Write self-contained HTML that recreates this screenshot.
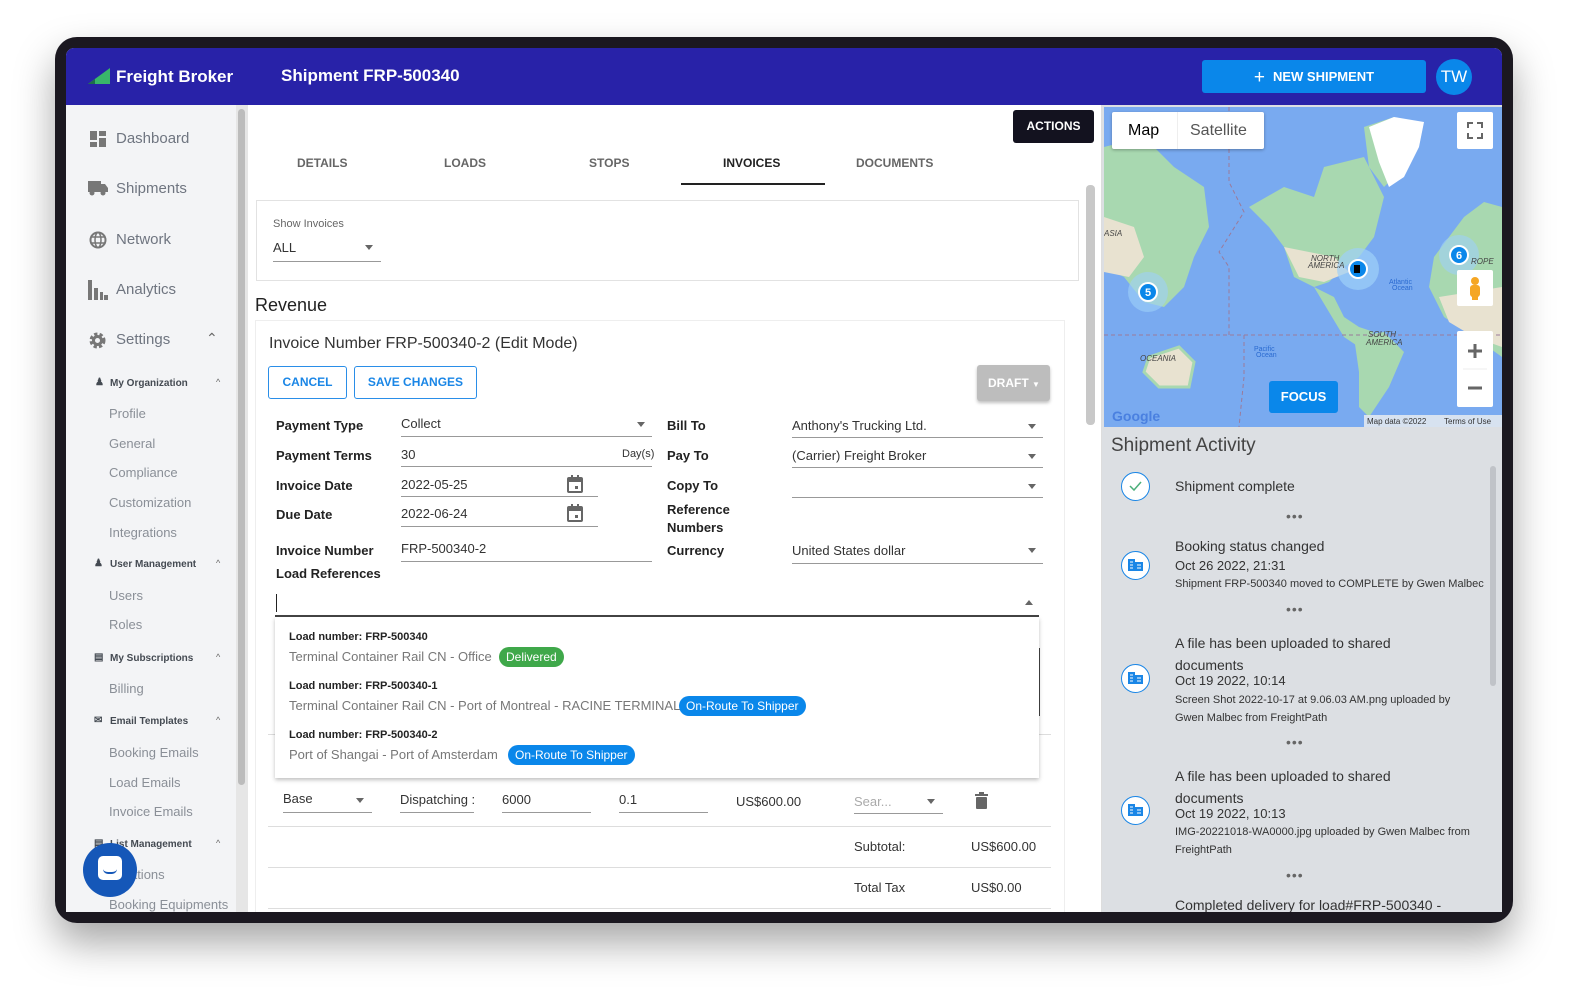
<!DOCTYPE html>
<html><head><meta charset="utf-8"><style>
*{box-sizing:border-box;margin:0;padding:0}
body{width:1572px;height:999px;background:#fff;font-family:"Liberation Sans",sans-serif;position:relative;overflow:hidden}
.a{position:absolute}
.frame{left:55px;top:37px;width:1458px;height:886px;background:#1b1820;border-radius:22px;box-shadow:0 20px 40px rgba(0,0,0,.35)}
.screen{left:66px;top:48px;width:1436px;height:864px;background:#fff;overflow:hidden;border-radius:8px 8px 0 0}
.hdr{left:0;top:0;width:1436px;height:57px;background:#2822a8;color:#fff}
.side{left:0;top:57px;width:170px;height:807px;background:#f3f4f6}
.nav{left:50px;font-size:15px;color:#6f7580}
.sub{left:43px;font-size:13px;color:#8a8f97}
.grp{left:44px;font-size:10px;font-weight:bold;color:#444a52}
.car{left:150px;font-size:9px;color:#666}
.tab{font-size:12px;font-weight:bold;color:#666;top:108px}
.lbl{font-size:13px;font-weight:bold;color:#222}
.val{font-size:13px;color:#333}
.ul{height:1px;background:#999}
.tri{width:0;height:0;border-left:4px solid transparent;border-right:4px solid transparent;border-top:5px solid #666}
.btn{border:1px solid #2a8ee8;color:#1a86e6;font-size:12px;font-weight:bold;border-radius:3px;text-align:center;line-height:31px}
.chip{border-radius:11px;color:#fff;font-size:12px;padding:0 7px;line-height:20px;height:20px}
.act{font-size:14px;color:#333}
.dots{font-size:14px;color:#666;letter-spacing:1px}
.ico{width:29px;height:29px;border:1.5px solid #1a86e6;border-radius:50%;background:#fff}
</style></head><body>
<div class="a frame"></div>
<div class="a screen">
 <div class="a hdr">
  <svg class="a" style="left:22px;top:20px" width="22" height="16"><polygon points="0,16 22,0 22,16" fill="#39b66a"/><polygon points="0,16 7,11 7,16" fill="#1e6e4a"/></svg>
  <div class="a" style="left:50px;top:19px;font-size:17px;font-weight:bold">Freight Broker</div>
  <div class="a" style="left:215px;top:18px;font-size:17px;font-weight:bold">Shipment FRP-500340</div>
  <div class="a" style="left:1136px;top:12px;width:224px;height:33px;background:#0a87ea;border-radius:3px;text-align:center;line-height:33px;font-size:13px;font-weight:bold"><span style="font-size:19px;font-weight:normal;vertical-align:-2px;margin-right:8px">+</span>NEW SHIPMENT</div>
  <div class="a" style="left:1370px;top:11px;width:36px;height:36px;border-radius:50%;background:#0a87ea;text-align:center;line-height:36px;font-size:17px">TW</div>
 </div>
 <div class="a side">
  <svg class="a" style="left:24px;top:26px" width="16" height="16"><rect x="0" y="0" width="7" height="9" fill="#777"/><rect x="9" y="0" width="7" height="5" fill="#777"/><rect x="0" y="11" width="7" height="5" fill="#777"/><rect x="9" y="7" width="7" height="9" fill="#777"/></svg>
  <div class="a nav" style="top:25px">Dashboard</div>
  <svg class="a" style="left:22px;top:76px" width="20" height="15"><rect x="0" y="0" width="13" height="11" fill="#777"/><path d="M13 3h4l3 4v4h-7z" fill="#777"/><circle cx="4" cy="12" r="2.5" fill="#777"/><circle cx="15" cy="12" r="2.5" fill="#777"/></svg>
  <div class="a nav" style="top:75px">Shipments</div>
  <svg class="a" style="left:23px;top:126px" width="18" height="18"><circle cx="9" cy="9" r="7.5" fill="none" stroke="#777" stroke-width="2"/><ellipse cx="9" cy="9" rx="3" ry="7.5" fill="none" stroke="#777" stroke-width="1.5"/><path d="M2 6h14M2 12h14" stroke="#777" stroke-width="1.5"/></svg>
  <div class="a nav" style="top:126px">Network</div>
  <svg class="a" style="left:22px;top:175px" width="20" height="20"><rect x="0" y="0" width="4" height="20" fill="#777"/><rect x="6" y="8" width="4" height="12" fill="#777"/><rect x="12" y="12" width="3" height="8" fill="#777"/><rect x="16" y="15" width="4" height="5" fill="#777"/></svg>
  <div class="a nav" style="top:176px">Analytics</div>
  <svg class="a" style="left:23px;top:227px" width="17" height="17"><circle cx="8.5" cy="8.5" r="6" fill="none" stroke="#777" stroke-width="4" stroke-dasharray="3 2"/><circle cx="8.5" cy="8.5" r="4" fill="none" stroke="#777" stroke-width="3"/></svg>
  <div class="a nav" style="top:226px">Settings</div>
  <div class="a" style="left:140px;top:225px;font-size:14px;color:#666">&#x2303;</div>
  <div class="a grp" style="left:29px;top:272px">&#9823;</div><div class="a grp" style="top:273px">My Organization</div><div class="a car" style="top:272px">^</div>
  <div class="a sub" style="top:301px">Profile</div>
  <div class="a sub" style="top:331px">General</div>
  <div class="a sub" style="top:360px">Compliance</div>
  <div class="a sub" style="top:390px">Customization</div>
  <div class="a sub" style="top:420px">Integrations</div>
  <div class="a grp" style="left:28px;top:453px">&#9823;</div><div class="a grp" style="top:454px">User Management</div><div class="a car" style="top:453px">^</div>
  <div class="a sub" style="top:483px">Users</div>
  <div class="a sub" style="top:512px">Roles</div>
  <div class="a grp" style="left:28px;top:547px">&#9636;</div><div class="a grp" style="top:548px">My Subscriptions</div><div class="a car" style="top:547px">^</div>
  <div class="a sub" style="top:576px">Billing</div>
  <div class="a grp" style="left:28px;top:610px">&#9993;</div><div class="a grp" style="top:611px">Email Templates</div><div class="a car" style="top:610px">^</div>
  <div class="a sub" style="top:640px">Booking Emails</div>
  <div class="a sub" style="top:670px">Load Emails</div>
  <div class="a sub" style="top:699px">Invoice Emails</div>
  <div class="a grp" style="left:28px;top:733px">&#9636;</div><div class="a grp" style="top:734px">List Management</div><div class="a car" style="top:733px">^</div>
  <div class="a sub" style="top:762px">Locations</div>
  <div class="a sub" style="top:792px">Booking Equipments</div>
  <div class="a" style="left:17px;top:738px;width:54px;height:54px;border-radius:50%;background:#1557b8"><div class="a" style="left:15px;top:13px;width:24px;height:24px;background:#fff;border-radius:5px"></div><div class="a" style="left:20px;top:26px;width:14px;height:5px;border-bottom:2px solid #1557b8;border-radius:0 0 8px 8px"></div></div>
 </div>
 <div class="a" style="left:170px;top:57px;width:12px;height:807px;background:#e6e6e6"><div class="a" style="left:2px;top:4px;width:7px;height:676px;background:#bcbcbc;border-radius:4px"></div></div>
 <div class="a" style="left:182px;top:57px;width:854px;height:807px;background:#fff;border-right:1px solid #ddd"></div>
 <div class="a" style="left:947px;top:62px;width:81px;height:33px;background:#13121f;border-radius:3px;color:#fff;font-size:12px;font-weight:bold;text-align:center;line-height:33px">ACTIONS</div>
 <div class="a tab" style="left:231px">DETAILS</div>
 <div class="a tab" style="left:378px">LOADS</div>
 <div class="a tab" style="left:523px">STOPS</div>
 <div class="a tab" style="left:657px;color:#222">INVOICES</div>
 <div class="a" style="left:615px;top:135px;width:144px;height:2px;background:#222"></div>
 <div class="a tab" style="left:790px">DOCUMENTS</div>
 <div class="a" style="left:1020px;top:137px;width:9px;height:240px;background:#c8c8c8;border-radius:4px"></div>
 <div class="a" style="left:190px;top:152px;width:823px;height:81px;border:1px solid #e2e2e2"></div>
 <div class="a" style="left:207px;top:170px;font-size:11px;color:#666">Show Invoices</div>
 <div class="a val" style="left:207px;top:192px">ALL</div>
 <div class="a tri" style="left:299px;top:197px"></div>
 <div class="a ul" style="left:207px;top:213px;width:108px"></div>
 <div class="a" style="left:189px;top:247px;font-size:18px;color:#222">Revenue</div>
 <div class="a" style="left:189px;top:272px;width:810px;height:600px;border:1px solid #eee;border-bottom:none"></div>
 <div class="a" style="left:203px;top:287px;font-size:16px;color:#333">Invoice Number FRP-500340-2 (Edit Mode)</div>
 <div class="a btn" style="left:202px;top:318px;width:79px;height:33px">CANCEL</div>
 <div class="a btn" style="left:288px;top:318px;width:123px;height:33px">SAVE CHANGES</div>
 <div class="a" style="left:911px;top:317px;width:73px;height:36px;background:#bdbdbd;border-radius:3px;color:#fff;font-size:12px;font-weight:bold;line-height:36px;padding-left:11px;box-shadow:0 2px 3px rgba(0,0,0,.25)">DRAFT <span style="font-size:8px">&#9660;</span></div>
 <div class="a lbl" style="left:210px;top:370px">Payment Type</div>
 <div class="a val" style="left:335px;top:368px">Collect</div><div class="a tri" style="left:571px;top:374px"></div><div class="a ul" style="left:335px;top:388px;width:251px"></div>
 <div class="a lbl" style="left:210px;top:400px">Payment Terms</div>
 <div class="a val" style="left:335px;top:399px">30</div><div class="a" style="left:556px;top:400px;font-size:11px;color:#333">Day(s)</div><div class="a ul" style="left:335px;top:418px;width:251px"></div>
 <div class="a lbl" style="left:210px;top:430px">Invoice Date</div>
 <div class="a val" style="left:335px;top:429px">2022-05-25</div><div class="a ul" style="left:335px;top:448px;width:197px"></div>
 <div class="a lbl" style="left:210px;top:459px">Due Date</div>
 <div class="a val" style="left:335px;top:458px">2022-06-24</div><div class="a ul" style="left:335px;top:478px;width:197px"></div>
 <svg class="a" style="left:501px;top:427px" width="16" height="18"><rect x="1" y="3" width="14" height="14" rx="1" fill="none" stroke="#666" stroke-width="2"/><rect x="1" y="3" width="14" height="4" fill="#666"/><rect x="4" y="0" width="2" height="4" fill="#666"/><rect x="10" y="0" width="2" height="4" fill="#666"/><rect x="8" y="11" width="3" height="3" fill="#666"/></svg>
 <svg class="a" style="left:501px;top:456px" width="16" height="18"><rect x="1" y="3" width="14" height="14" rx="1" fill="none" stroke="#666" stroke-width="2"/><rect x="1" y="3" width="14" height="4" fill="#666"/><rect x="4" y="0" width="2" height="4" fill="#666"/><rect x="10" y="0" width="2" height="4" fill="#666"/><rect x="8" y="11" width="3" height="3" fill="#666"/></svg>
 <div class="a lbl" style="left:210px;top:495px">Invoice Number</div>
 <div class="a val" style="left:335px;top:493px">FRP-500340-2</div><div class="a ul" style="left:335px;top:513px;width:251px"></div>
 <div class="a lbl" style="left:210px;top:518px">Load References</div>
 <div class="a lbl" style="left:601px;top:370px">Bill To</div>
 <div class="a val" style="left:726px;top:370px">Anthony's Trucking Ltd.</div><div class="a tri" style="left:962px;top:376px"></div><div class="a ul" style="left:726px;top:389px;width:251px"></div>
 <div class="a lbl" style="left:601px;top:400px">Pay To</div>
 <div class="a val" style="left:726px;top:400px">(Carrier) Freight Broker</div><div class="a tri" style="left:962px;top:406px"></div><div class="a ul" style="left:726px;top:419px;width:251px"></div>
 <div class="a lbl" style="left:601px;top:430px">Copy To</div><div class="a tri" style="left:962px;top:436px"></div><div class="a ul" style="left:726px;top:449px;width:251px"></div>
 <div class="a lbl" style="left:601px;top:453px;line-height:18px">Reference<br>Numbers</div>
 <div class="a lbl" style="left:601px;top:495px">Currency</div>
 <div class="a val" style="left:726px;top:495px">United States dollar</div><div class="a tri" style="left:962px;top:500px"></div><div class="a ul" style="left:726px;top:515px;width:251px"></div>
 <div class="a" style="left:210px;top:546px;width:1px;height:18px;background:#222"></div>
 <div class="a" style="left:959px;top:552px;width:0;height:0;border-left:4px solid transparent;border-right:4px solid transparent;border-bottom:5px solid #666"></div>
 <div class="a" style="left:209px;top:567px;width:764px;height:2px;background:#444"></div>
 <div class="a" style="left:202px;top:686px;width:783px;height:1px;background:#ddd"></div>
 <div class="a" style="left:973px;top:600px;width:1px;height:68px;background:#444"></div>
 <div class="a" style="left:209px;top:569px;width:764px;height:161px;background:#fff;box-shadow:0 2px 4px rgba(0,0,0,.25)"></div>
 <div class="a" style="left:223px;top:583px;font-size:11px;font-weight:bold;color:#222">Load number: FRP-500340</div>
 <div class="a" style="left:223px;top:601px;font-size:13px;color:#777">Terminal Container Rail CN - Office</div>
 <div class="a chip" style="left:433px;top:599px;background:#3fa84a">Delivered</div>
 <div class="a" style="left:223px;top:632px;font-size:11px;font-weight:bold;color:#222">Load number: FRP-500340-1</div>
 <div class="a" style="left:223px;top:650px;font-size:13px;color:#777">Terminal Container Rail CN - Port of Montreal - RACINE TERMINAL</div>
 <div class="a chip" style="left:613px;top:648px;background:#0a87ea">On-Route To Shipper</div>
 <div class="a" style="left:223px;top:681px;font-size:11px;font-weight:bold;color:#222">Load number: FRP-500340-2</div>
 <div class="a" style="left:223px;top:699px;font-size:13px;color:#777">Port of Shangai - Port of Amsterdam</div>
 <div class="a chip" style="left:442px;top:697px;background:#0a87ea">On-Route To Shipper</div>
 <div class="a val" style="left:217px;top:743px">Base</div><div class="a tri" style="left:290px;top:750px"></div><div class="a ul" style="left:217px;top:764px;width:89px"></div>
 <div class="a val" style="left:334px;top:744px">Dispatching :</div><div class="a ul" style="left:334px;top:764px;width:74px"></div>
 <div class="a val" style="left:436px;top:744px">6000</div><div class="a ul" style="left:436px;top:764px;width:89px"></div>
 <div class="a val" style="left:553px;top:744px">0.1</div><div class="a ul" style="left:553px;top:764px;width:89px"></div>
 <div class="a val" style="left:670px;top:746px">US$600.00</div>
 <div class="a" style="left:788px;top:746px;font-size:13px;color:#aaa">Sear...</div><div class="a tri" style="left:861px;top:751px"></div><div class="a ul" style="left:788px;top:765px;width:89px"></div>
 <svg class="a" style="left:909px;top:744px" width="13" height="17"><rect x="0" y="2" width="13" height="2" fill="#666"/><rect x="4" y="0" width="5" height="2" fill="#666"/><rect x="1" y="5" width="11" height="12" rx="1" fill="#666"/></svg>
 <div class="a" style="left:202px;top:778px;width:783px;height:1px;background:#ddd"></div>
 <div class="a val" style="left:788px;top:791px">Subtotal:</div><div class="a val" style="left:905px;top:791px">US$600.00</div>
 <div class="a" style="left:202px;top:819px;width:783px;height:1px;background:#ddd"></div>
 <div class="a val" style="left:788px;top:832px">Total Tax</div><div class="a val" style="left:905px;top:832px">US$0.00</div>
 <div class="a" style="left:202px;top:860px;width:783px;height:1px;background:#ddd"></div>
 <div class="a" style="left:1036px;top:57px;width:400px;height:807px;background:#dcdfe3"></div>
 <svg class="a" style="left:1038px;top:59px" width="398" height="320" viewBox="0 0 398 320">
  <rect width="398" height="320" fill="#79aaf0"/>
  <path d="M0 40 L40 30 L70 60 L100 80 L105 120 L90 150 L80 180 L60 200 L40 195 L20 170 L0 160Z" fill="#a8d8b0"/>
  <path d="M0 110 L30 120 L40 150 L25 170 L0 165Z" fill="#e8e2d0"/>
  <path d="M45 250 L75 240 L90 255 L85 280 L55 280 L40 265Z" fill="#e8e2d0" stroke="#a8d8b0" stroke-width="3"/>
  <path d="M145 100 L180 80 L210 90 L220 60 L260 50 L280 90 L270 130 L255 150 L240 160 L225 175 L210 180 L190 170 L180 140 L165 120Z" fill="#a8d8b0"/>
  <path d="M180 140 L230 150 L245 165 L220 175 L195 170Z" fill="#e8e2d0"/>
  <path d="M210 180 L230 190 L240 210 L255 220 L270 225 L255 240 L240 230Z" fill="#a8d8b0"/>
  <path d="M250 230 L280 225 L300 245 L285 280 L265 310 L255 300 L255 265Z" fill="#a8d8b0"/>
  <path d="M260 20 L290 10 L310 30 L300 60 L280 80 L265 60Z" fill="#a8d8b0"/>
  <path d="M265 20 L290 10 L320 15 L315 40 L300 70 L285 80 L275 55Z" fill="#fff"/>
  <path d="M330 150 L360 110 L380 95 L398 100 L398 250 L370 230 L340 210 L325 180Z" fill="#a8d8b0"/>
  <path d="M335 190 L398 180 L398 240 L370 230 L345 215Z" fill="#e8e2d0"/>
  <path d="M0 228 H398" stroke="#9a7a9a" stroke-width="1" stroke-dasharray="4 3"/>
  <path d="M125 0 V75 L140 105 L115 145 L125 160 V228 M140 228 V270 L135 320" stroke="#9a7a9a" stroke-width="1" stroke-dasharray="4 3" fill="none"/>
  <circle cx="44" cy="185" r="20" fill="#9ed0f8" opacity=".6"/><circle cx="44" cy="185" r="9" fill="#0a87ea" stroke="#fff" stroke-width="2"/><text x="44" y="189" font-size="11" fill="#fff" text-anchor="middle" font-family="Liberation Sans" font-weight="bold">5</text>
  <circle cx="254" cy="162" r="21" fill="#9ed0f8" opacity=".7"/><circle cx="254" cy="162" r="9" fill="#0a87ea" stroke="#fff" stroke-width="2"/><rect x="250" y="158" width="6" height="8" fill="#000"/>
  <circle cx="355" cy="148" r="20" fill="#9ed0f8" opacity=".6"/><circle cx="355" cy="148" r="9" fill="#0a87ea" stroke="#fff" stroke-width="2"/><text x="355" y="152" font-size="11" fill="#fff" text-anchor="middle" font-family="Liberation Sans" font-weight="bold">6</text>
  <text x="207" y="154" font-size="8" fill="#444" font-family="Liberation Sans" font-style="italic">NORTH</text><text x="204" y="161" font-size="8" fill="#444" font-family="Liberation Sans" font-style="italic">AMERICA</text>
  <text x="0" y="129" font-size="8" fill="#444" font-family="Liberation Sans" font-style="italic">ASIA</text>
  <text x="367" y="157" font-size="8" fill="#444" font-family="Liberation Sans" font-style="italic">ROPE</text>
  <text x="36" y="254" font-size="8" fill="#444" font-family="Liberation Sans" font-style="italic">OCEANIA</text>
  <text x="264" y="230" font-size="8" fill="#444" font-family="Liberation Sans" font-style="italic">SOUTH</text><text x="262" y="238" font-size="8" fill="#444" font-family="Liberation Sans" font-style="italic">AMERICA</text>
  <text x="285" y="177" font-size="7" fill="#2a6ad0" font-family="Liberation Sans">Atlantic</text><text x="288" y="183" font-size="7" fill="#2a6ad0" font-family="Liberation Sans">Ocean</text>
  <text x="150" y="244" font-size="7" fill="#2a6ad0" font-family="Liberation Sans">Pacific</text><text x="152" y="250" font-size="7" fill="#2a6ad0" font-family="Liberation Sans">Ocean</text>
  <text x="8" y="314" font-size="14" fill="#4a80e0" font-family="Liberation Sans" font-weight="bold">Google</text>
  <rect x="260" y="308" width="138" height="12" fill="#e8ecf0" opacity=".85"/>
  <text x="263" y="317" font-size="8" fill="#333" font-family="Liberation Sans">Map data ©2022</text><text x="340" y="317" font-size="8" fill="#333" font-family="Liberation Sans">Terms of Use</text>
 </svg>
 <div class="a" style="left:1046px;top:64px;width:152px;height:37px;background:#fff;border-radius:2px;box-shadow:0 1px 3px rgba(0,0,0,.3)"></div>
 <div class="a" style="left:1062px;top:74px;font-size:16px;color:#000">Map</div>
 <div class="a" style="left:1124px;top:74px;font-size:16px;color:#555">Satellite</div>
 <div class="a" style="left:1111px;top:64px;width:1px;height:37px;background:#eee"></div>
 <div class="a" style="left:1391px;top:64px;width:36px;height:37px;background:#fff;border-radius:2px"><svg width="36" height="37"><path d="M11 16v-5h5M20 11h5v5M25 21v5h-5M16 26h-5v-5" stroke="#666" stroke-width="2" fill="none"/></svg></div>
 <div class="a" style="left:1391px;top:222px;width:36px;height:36px;background:#fff;border-radius:2px"><svg width="36" height="36"><circle cx="18" cy="11" r="4" fill="#f5a623"/><rect x="13" y="15" width="10" height="12" rx="3" fill="#f5a623"/><rect x="15" y="25" width="6" height="5" fill="#f5a623"/></svg></div>
 <div class="a" style="left:1391px;top:283px;width:36px;height:76px;background:#fff;border-radius:2px"><svg width="36" height="76"><path d="M11 20h14M18 13v14M11 57h14" stroke="#666" stroke-width="3"/><path d="M6 38h24" stroke="#eee"/></svg></div>
 <div class="a" style="left:1203px;top:333px;width:69px;height:32px;background:#0a87ea;border-radius:3px;color:#fff;font-size:13px;font-weight:bold;text-align:center;line-height:32px">FOCUS</div>
 <div class="a" style="left:1045px;top:387px;font-size:19px;color:#444">Shipment Activity</div>
 <div class="a" style="left:1424px;top:418px;width:6px;height:220px;background:#c0c3c8;border-radius:3px"></div>
 <div class="a ico" style="left:1055px;top:424px"><svg width="26" height="26"><path d="M8 13l4 4 7-8" stroke="#4caf7a" stroke-width="1.5" fill="none"/></svg></div>
 <div class="a act" style="left:1109px;top:430px">Shipment complete</div>
 <div class="a dots" style="left:1220px;top:460px">&bull;&bull;&bull;</div>
 <div class="a ico" style="left:1055px;top:503px"><svg width="26" height="26"><rect x="6" y="7" width="7" height="12" fill="#1a86e6"/><rect x="13" y="10" width="8" height="9" fill="#1a86e6"/><path d="M8 10h3M8 13h3M8 16h3M15 13h4M15 16h4" stroke="#fff"/></svg></div>
 <div class="a act" style="left:1109px;top:490px">Booking status changed</div>
 <div class="a" style="left:1109px;top:510px;font-size:13px;color:#333">Oct 26 2022, 21:31</div>
 <div class="a" style="left:1109px;top:530px;font-size:11px;color:#333">Shipment FRP-500340 moved to COMPLETE by Gwen Malbec</div>
 <div class="a dots" style="left:1220px;top:553px">&bull;&bull;&bull;</div>
 <div class="a ico" style="left:1055px;top:616px"><svg width="26" height="26"><rect x="6" y="7" width="7" height="12" fill="#1a86e6"/><rect x="13" y="10" width="8" height="9" fill="#1a86e6"/><path d="M8 10h3M8 13h3M8 16h3M15 13h4M15 16h4" stroke="#fff"/></svg></div>
 <div class="a act" style="left:1109px;top:584px;line-height:22px">A file has been uploaded to shared<br>documents</div>
 <div class="a" style="left:1109px;top:625px;font-size:13px;color:#333">Oct 19 2022, 10:14</div>
 <div class="a" style="left:1109px;top:643px;font-size:11px;color:#333;line-height:18px">Screen Shot 2022-10-17 at 9.06.03 AM.png uploaded by<br>Gwen Malbec from FreightPath</div>
 <div class="a dots" style="left:1220px;top:686px">&bull;&bull;&bull;</div>
 <div class="a ico" style="left:1055px;top:748px"><svg width="26" height="26"><rect x="6" y="7" width="7" height="12" fill="#1a86e6"/><rect x="13" y="10" width="8" height="9" fill="#1a86e6"/><path d="M8 10h3M8 13h3M8 16h3M15 13h4M15 16h4" stroke="#fff"/></svg></div>
 <div class="a act" style="left:1109px;top:717px;line-height:22px">A file has been uploaded to shared<br>documents</div>
 <div class="a" style="left:1109px;top:758px;font-size:13px;color:#333">Oct 19 2022, 10:13</div>
 <div class="a" style="left:1109px;top:775px;font-size:11px;color:#333;line-height:18px">IMG-20221018-WA0000.jpg uploaded by Gwen Malbec from<br>FreightPath</div>
 <div class="a dots" style="left:1220px;top:819px">&bull;&bull;&bull;</div>
 <div class="a act" style="left:1109px;top:849px">Completed delivery for load#FRP-500340 -</div>
</div>
</body></html>
